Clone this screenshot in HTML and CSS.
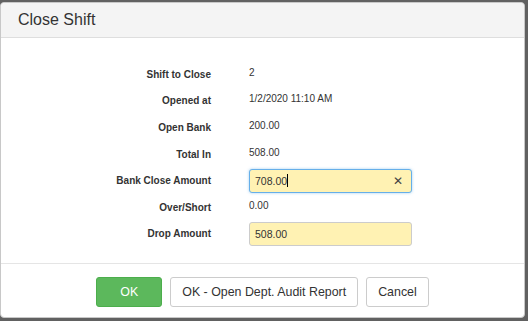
FILE: index.html
```html
<!DOCTYPE html>
<html lang="en">
<head>
    <meta charset="UTF-8">
    <title>Close Shift</title>
    <link rel="stylesheet" href="styles.css">
</head>
<body>

    <div class="modal">
        <div class="modal-header">
            <h4 class="modal-title">Close Shift</h4>
        </div>

        <div class="modal-body">
            <div class="form-row">
                <label>Shift to Close</label>
                <span class="value">2</span>
            </div>
            <div class="form-row">
                <label>Opened at</label>
                <span class="value">1/2/2020 11:10 AM</span>
            </div>
            <div class="form-row">
                <label>Open Bank</label>
                <span class="value">200.00</span>
            </div>
            <div class="form-row">
                <label>Total In</label>
                <span class="value">508.00</span>
            </div>
            <div class="form-row">
                <label>Bank Close Amount</label>
                <div class="input-wrap focused">
                    <span class="input-text">708.00<span class="caret"></span></span>
                    <span class="clear">&#x2715;</span>
                </div>
            </div>
            <div class="form-row">
                <label>Over/Short</label>
                <span class="value">0.00</span>
            </div>
            <div class="form-row">
                <label>Drop Amount</label>
                <div class="input-wrap">
                    <span class="input-text">508.00</span>
                </div>
            </div>
        </div>

        <div class="modal-footer">
            <button type="button" class="btn btn-success">OK</button>
            <button type="button" class="btn btn-default">OK - Open Dept. Audit Report</button>
            <button type="button" class="btn btn-default">Cancel</button>
        </div>
    </div>

</body>
</html>
```

FILE: styles.css
```css
* {
    margin: 0;
    padding: 0;
    box-sizing: border-box;
    font-family: 'Liberation Sans', Arial, sans-serif;
}

body {
    background: #616161;
    padding: 2px 3px 3px 0;
    height: 321px;
}

.modal {
    background: #ffffff;
    border: 1px solid #c8c8c8;
    border-radius: 4px;
    height: 316px;
    display: flex;
    flex-direction: column;
}

.modal-header {
    background: #f4f4f4;
    border-bottom: 1px solid #dedede;
    border-radius: 4px 4px 0 0;
    height: 35px;
    padding: 8px 17px;
}

.modal-title {
    font-size: 16px;
    font-weight: normal;
    color: #333;
}

.modal-body {
    padding: 23px 0 0;
    height: 225px;
}

.form-row {
    display: flex;
    align-items: center;
    height: 26.6px;
}

.form-row label {
    width: 210px;
    text-align: right;
    font-size: 10px;
    font-weight: bold;
    color: #333;
    margin-right: 38px;
}

.value {
    font-size: 10px;
    color: #333;
    margin-top: -4px;
}

.input-wrap {
    width: 163px;
    height: 24px;
    background: #fff2b3;
    border: 1px solid #ccc;
    border-radius: 3px;
    display: flex;
    align-items: center;
    justify-content: space-between;
    padding: 0 8px 0 5px;
}

.input-wrap.focused {
    border-color: #66afe9;
    box-shadow: 0 0 3px rgba(102, 175, 233, 0.6);
}

.input-text {
    font-size: 10.5px;
    color: #333;
    display: flex;
    align-items: center;
}

.caret {
    display: inline-block;
    width: 1px;
    height: 13px;
    background: #000;
}

.clear {
    font-size: 12px;
    color: #444;
}

.modal-footer {
    border-top: 1px solid #e5e5e5;
    display: flex;
    justify-content: center;
    gap: 8px;
    padding: 13px 0 0;
    flex: 1;
}

.btn {
    height: 30px;
    padding: 0 11px;
    border: 1px solid #ccc;
    border-radius: 3px;
    background: #fff;
    color: #333;
    font-size: 12.4px;
}

.btn-success {
    background: #5cb85c;
    border-color: #4cae4c;
    color: #fff;
    width: 66px;
}
```
